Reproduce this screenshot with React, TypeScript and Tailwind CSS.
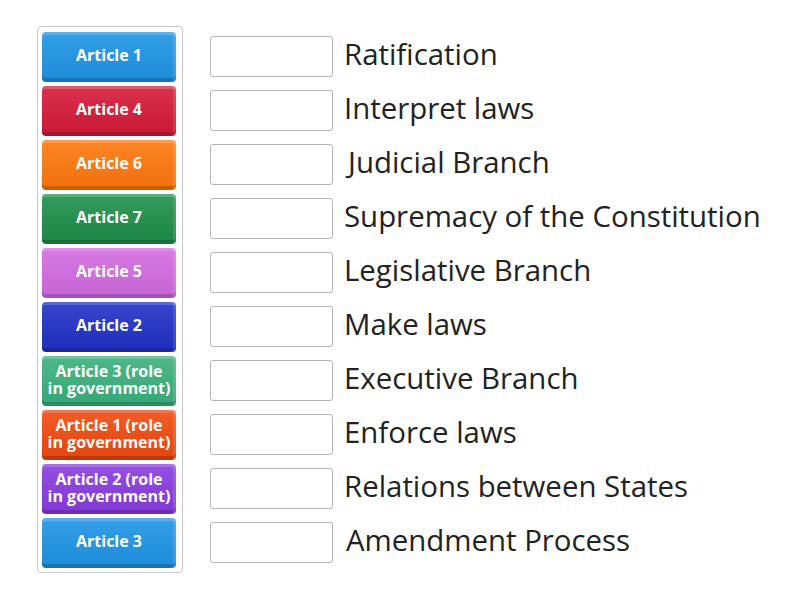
import React from "react";

const tiles: { label: string[]; bg: string }[] = [
  { label: ["Article 1"], bg: "bg-[#1f95e6]" },
  { label: ["Article 4"], bg: "bg-[#d51b3a]" },
  { label: ["Article 6"], bg: "bg-[#ff780e]" },
  { label: ["Article 7"], bg: "bg-[#1f8f4c]" },
  { label: ["Article 5"], bg: "bg-[#d46be2]" },
  { label: ["Article 2"], bg: "bg-[#2232c7]" },
  { label: ["Article 3 (role", "in government)"], bg: "bg-[#3ab17c]" },
  { label: ["Article 1 (role", "in government)"], bg: "bg-[#f04b0f]" },
  { label: ["Article 2 (role", "in government)"], bg: "bg-[#8a3ce0]" },
  { label: ["Article 3"], bg: "bg-[#1f95e6]" },
];

const targets: { text: string; shift: string }[] = [
  { text: "Ratification", shift: "ml-[11px]" },
  { text: "Interpret laws", shift: "ml-[11px]" },
  { text: "Judicial Branch", shift: "ml-[15px]" },
  { text: "Supremacy of the Constitution", shift: "ml-[11px]" },
  { text: "Legislative Branch", shift: "ml-[11px]" },
  { text: "Make laws", shift: "ml-[11px]" },
  { text: "Executive Branch", shift: "ml-[11px]" },
  { text: "Enforce laws", shift: "ml-[11px]" },
  { text: "Relations between States", shift: "ml-[11px]" },
  { text: "Amendment Process", shift: "ml-[13px]" },
];

export default function App() {
  return (
    <div
      className="w-[800px] h-[600px] bg-white flex items-start pt-[26px] pl-[37px]"
      style={{ fontFamily: '"Open Sans", "Noto Sans", sans-serif' }}
    >
      <div className="w-[146px] border border-[#c8c8c8] rounded-[4px] pl-[4px] pr-[6px] pt-[5px] pb-[4px] flex flex-col gap-[4px]">
        {tiles.map((t, i) => (
          <div
            key={i}
            className={`${t.bg} h-[50px] rounded-[4px] flex items-center justify-center pb-[3px] text-white font-bold text-[16px] leading-[17px] text-center shadow-[inset_0_3px_0_rgba(255,255,255,0.18),inset_-3px_0_0_rgba(255,255,255,0.12),inset_0_-4px_0_rgba(0,0,0,0.18)] bg-gradient-to-b from-white/10 to-black/5`}
          >
            <span className="whitespace-nowrap">
              {t.label.map((l, j) => (
                <React.Fragment key={j}>
                  {j > 0 && <br />}
                  {l}
                </React.Fragment>
              ))}
            </span>
          </div>
        ))}
      </div>
      <div className="ml-[27px] pt-[10px] flex flex-col gap-[13px]">
        {targets.map((t, i) => (
          <div key={i} className="flex items-center h-[41px]">
            <div className="w-[123px] h-[41px] shrink-0 border border-[#b4b4b4] rounded-[3px] bg-white" />
            <span className={`mb-[6px] text-[29.4px] text-[#222] leading-[30px] whitespace-nowrap ${t.shift}`}>
              {t.text}
            </span>
          </div>
        ))}
      </div>
    </div>
  );
}
